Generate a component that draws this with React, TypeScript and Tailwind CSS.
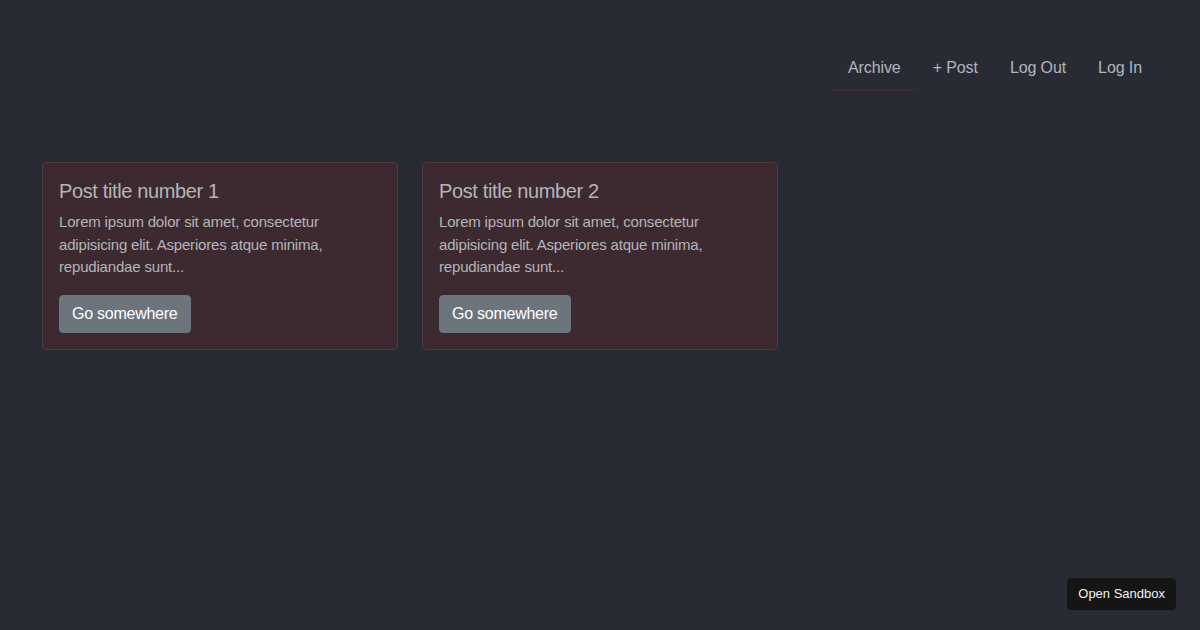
import { Fragment } from "react";

const posts = [
  { id: 1, title: "Post title number 1" },
  { id: 2, title: "Post title number 2" },
];

const navItems = ["Archive", "+ Post", "Log Out", "Log In"];

export default function App() {
  return (
    <div
      className="relative min-h-[630px] w-full bg-[#282b34] text-[#b3b5bb]"
      style={{ fontFamily: '"Liberation Sans", Arial, sans-serif' }}
    >
      <header className="flex justify-end px-[42px] pt-[47px]">
        <nav className="flex">
          {navItems.map((item, i) => (
            <Fragment key={item}>
              <a
                href="#"
                className={
                  "block px-4 py-[9px] text-base leading-6 tracking-[-0.1px] text-[#b3b5bb] " +
                  (i === 0 ? "border-b-2 border-[#45282f]" : "border-b-2 border-transparent")
                }
              >
                {item}
              </a>
            </Fragment>
          ))}
        </nav>
      </header>

      <main className="flex gap-[24px] px-[42px] pt-[71px]">
        {posts.map((post) => (
          <div
            key={post.id}
            className="w-[356px] rounded-[4px] border border-[#523940] bg-[#3d2a30] p-4"
          >
            <h5 className="mb-2 text-[20px] leading-[24px] tracking-[-0.37px] text-[#b3b5bb]">
              {post.title}
            </h5>
            <p className="mb-4 text-[15px] leading-[1.5] tracking-[-0.18px] text-[#b3b5bb]">
              Lorem ipsum dolor sit amet, consectetur adipisicing elit. Asperiores atque minima,
              repudiandae sunt...
            </p>
            <button className="rounded-[4px] border border-[#6c757d] bg-[#6c757d] px-3 py-[6px] text-base leading-6 tracking-[-0.25px] text-white">
              Go somewhere
            </button>
          </div>
        ))}
      </main>

      <button className="absolute bottom-[20px] right-[24px] h-[32px] rounded-[4px] bg-[#151515] px-[11px] text-[13px] text-[#f0f0f0]">
        Open Sandbox
      </button>
    </div>
  );
}
